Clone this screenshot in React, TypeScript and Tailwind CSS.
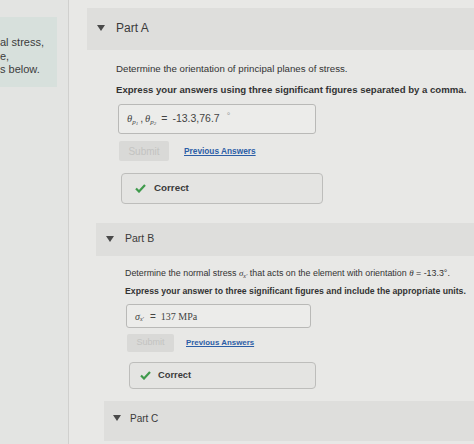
import React from 'react';

const sans = { fontFamily: '"Liberation Sans", Arial, sans-serif' };
const serif = { fontFamily: '"Liberation Serif", "Times New Roman", serif' };

function Caret() {
  return (
    <svg width="8" height="6" viewBox="0 0 8 6" className="shrink-0">
      <path d="M0 0 L8 0 L4 6 Z" fill="#4a4a4a" />
    </svg>
  );
}

function Check() {
  return (
    <svg width="11" height="9" viewBox="0 0 11 9" className="shrink-0">
      <path d="M1 4.5 L4 7.5 L10 1" fill="none" stroke="#3f9a4c" strokeWidth="2.2" />
    </svg>
  );
}

function PartHeader({ label, className }: { label: string; className: string }) {
  return (
    <div className={`flex items-center bg-[#dededc] ${className}`}>
      <Caret />
      <span className="text-[#3a3a3a] font-medium">{label}</span>
    </div>
  );
}

export default function App() {
  return (
    <div className="w-[474px] h-[444px] bg-[#e8e8e6] flex overflow-hidden" style={sans}>
      <aside className="w-[69px] shrink-0 border-r border-[#d0d0ce] bg-[#e3e4e2] pt-[17px]">
        <div className="w-[57px] h-[70px] bg-[#d7e0dc] pt-[19px] text-[11px] leading-[13.5px] text-[#3c3c3c]">
          <div>al stress,</div>
          <div>e,</div>
          <div>s below.</div>
        </div>
      </aside>

      <main className="flex-1 pt-[8px] pl-[18px]">
        {/* Part A */}
        <PartHeader label="Part A" className="h-[42px] pl-[10px] gap-[11px] text-[12px] pb-[2px]" />
        <div className="pl-[29px] text-[#333]">
          <p className="mt-[12px] text-[9.7px] leading-[13px] whitespace-nowrap">
            Determine the orientation of principal planes of stress.
          </p>
          <p className="mt-[8px] text-[9.6px] leading-[13px] font-bold whitespace-nowrap">
            Express your answers using three significant figures separated by a comma.
          </p>
          <div className="mt-[8px] ml-[2px] w-[198px] h-[30px] border border-[#b9b9b7] rounded-[3px] bg-[#ececea] flex items-center pl-[8px] text-[10.5px] text-[#444]">
            <span className="italic" style={serif}>
              θ<sub className="text-[7px]">p<sub className="text-[5px]">1</sub></sub>
            </span>
            <span className="mx-[2px]">,</span>
            <span className="italic" style={serif}>
              θ<sub className="text-[7px]">p<sub className="text-[5px]">2</sub></sub>
            </span>
            <span className="ml-[5px]">=</span>
            <span className="ml-[5px]">-13.3,76.7</span>
            <span className="ml-[7px] text-[#999] text-[9px] -mt-[5px]">°</span>
          </div>
          <div className="mt-[7px] ml-[3px] flex items-center gap-[15px]">
            <div className="w-[50px] h-[20px] bg-[#d9d9d7] rounded-[2px] flex items-center justify-center text-[10px] text-[#c3c3c1]">
              Submit
            </div>
            <span className="text-[8.3px] font-bold text-[#2c5ea6] underline">Previous Answers</span>
          </div>
          <div className="mt-[12px] ml-[5px] w-[202px] h-[31px] border border-[#bdbdbb] rounded-[4px] bg-[#e4e4e2] flex items-center pl-[13px] gap-[8px]">
            <Check />
            <span className="text-[9.8px] font-bold text-[#3a3a3a]">Correct</span>
          </div>
        </div>

        {/* Part B */}
        <PartHeader label="Part B" className="mt-[19px] ml-[9px] h-[33px] pl-[10px] gap-[11px] text-[10.5px] pb-[2px]" />
        <div className="pl-[38px] text-[#333]">
          <p className="mt-[11px] text-[8.9px] leading-[12px] whitespace-nowrap">
            Determine the normal stress{' '}
            <span className="italic" style={serif}>
              σ<sub className="text-[6px]">x′</sub>
            </span>{' '}
            that acts on the element with orientation{' '}
            <span className="italic" style={serif}>θ</span> = -13.3°.
          </p>
          <p className="mt-[6px] text-[8.7px] leading-[12px] font-bold whitespace-nowrap">
            Express your answer to three significant figures and include the appropriate units.
          </p>
          <div className="mt-[7px] ml-[1px] w-[185px] h-[24px] border border-[#b9b9b7] rounded-[3px] bg-[#ececea] flex items-center pl-[8px] text-[10px] text-[#444]">
            <span className="italic" style={serif}>
              σ<sub className="text-[6px]">x′</sub>
            </span>
            <span className="ml-[6px]">=</span>
            <span className="ml-[5px]" style={serif}>137 MPa</span>
          </div>
          <div className="mt-[6px] ml-[2px] flex items-center gap-[12px]">
            <div className="w-[47px] h-[18px] bg-[#d9d9d7] rounded-[2px] flex items-center justify-center text-[9px] text-[#c3c3c1]">
              Submit
            </div>
            <span className="text-[7.9px] font-bold text-[#2c5ea6] underline">Previous Answers</span>
          </div>
          <div className="mt-[10px] ml-[4px] w-[187px] h-[27px] border border-[#bdbdbb] rounded-[4px] bg-[#e4e4e2] flex items-center pl-[10px] gap-[7px]">
            <Check />
            <span className="text-[9.3px] font-bold text-[#3a3a3a]">Correct</span>
          </div>
        </div>

        {/* Part C */}
        <PartHeader label="Part C" className="mt-[12px] ml-[17px] h-[40px] pl-[9px] gap-[9px] text-[10px] pb-[6px]" />
      </main>
    </div>
  );
}
